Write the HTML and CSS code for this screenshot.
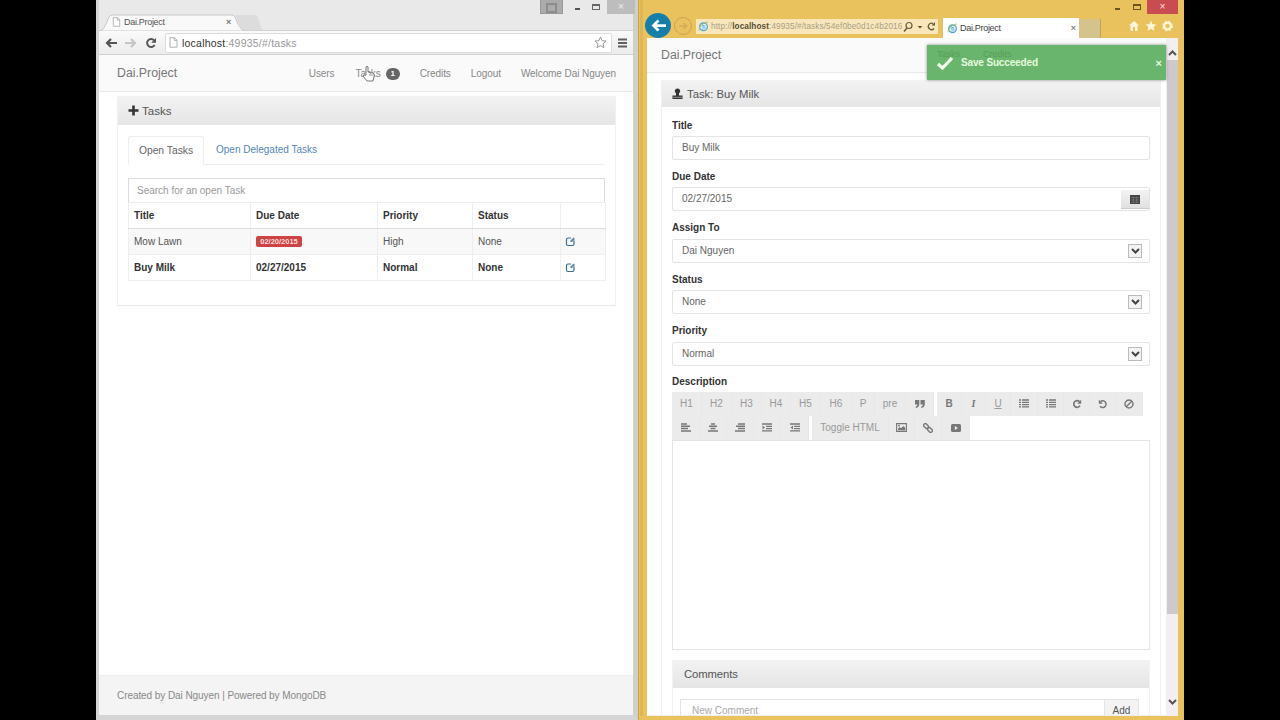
FILE: index.html
```
<!DOCTYPE html>
<html lang="en">
<head>
<meta charset="utf-8">
<title>Dai.Project</title>
<link rel="stylesheet" href="styles.css">
</head>
<body>
<svg class="defs" width="0" height="0">
  <symbol id="page" viewBox="0 0 9 11"><path d="M1 .7h4.5L8 3.2v7H1zM5.3.8v2.6H8" fill="#fff" stroke="#aaa" stroke-width=".9"/></symbol>
  <symbol id="arrow" viewBox="0 0 12 10"><path d="M6 1 2 5l4 4M2 5h10" fill="none" stroke="currentColor" stroke-width="2.2"/></symbol>
  <symbol id="reload" viewBox="0 0 12 12"><path d="M9.6 8A4 4 0 1 1 9 3.2" fill="none" stroke="currentColor" stroke-width="2"/><path d="M11 1v4.8H6.2z" fill="currentColor"/></symbol>
  <symbol id="undo" viewBox="0 0 12 12"><path d="M2.4 8.5A4 4 0 1 0 3 3.2" fill="none" stroke="currentColor" stroke-width="1.8"/><path d="M1 1v4.8h4.8z" fill="currentColor"/></symbol>
  <symbol id="edit" viewBox="0 0 11 11"><path d="M6 2H3Q1.500 2 1.500 3.500v4.500Q1.500 9.500 3 9.500h4.500Q9 9.500 9 8V4.500" fill="none" stroke="currentColor" stroke-width="1.200"/><path d="M5.500 4.500 8.500 1.500 10 3 7 6H5.500z" fill="currentColor" opacity=".8"/></symbol>
  <symbol id="list" viewBox="0 0 10 9"><path d="M0 1h2M0 3.300h2M0 5.600h2M0 7.900h2M3 1h7M3 3.300h7M3 5.600h7M3 7.900h7" stroke="currentColor" stroke-width="1.300"/></symbol>
  <symbol id="left" viewBox="0 0 10 9"><path d="M0 1h6M0 3.300h9M0 5.600h7M0 7.900h10" stroke="currentColor" stroke-width="1.500"/></symbol>
  <symbol id="center" viewBox="0 0 10 9"><path d="M3 1h4M1 3.300h8M2.500 5.600h5M0 7.900h10" stroke="currentColor" stroke-width="1.500"/></symbol>
  <symbol id="right" viewBox="0 0 10 9"><path d="M3 1h7M1 3.300h9M3 5.600h7M0 7.900h10" stroke="currentColor" stroke-width="1.500"/></symbol>
  <symbol id="indent" viewBox="0 0 10 9"><path d="M0 1h10M4 3.300h6M4 5.600h6M0 7.900h10" stroke="currentColor" stroke-width="1.300"/><path d="M.5 2.500 3 4.500.5 6.500z" fill="currentColor"/></symbol>
  <symbol id="outdent" viewBox="0 0 10 9"><path d="M0 1h10M4 3.300h6M4 5.600h6M0 7.900h10" stroke="currentColor" stroke-width="1.300"/><path d="M3 2.500.5 4.500 3 6.500z" fill="currentColor"/></symbol>
  <symbol id="ban" viewBox="0 0 10 10"><path d="M5 1a4 4 0 1 0 .01 0M2.300 7.700l5.400-5.400" fill="none" stroke="currentColor" stroke-width="1.400"/></symbol>
  <symbol id="quote" viewBox="0 0 10 8"><path d="M0 0h4.300v4.500Q4 7.500.8 8V6.500Q2.500 6 2.500 4.500H0zM5.500 0h4.300v4.500Q9.500 7.500 6.300 8V6.500Q8 6 8 4.500H5.500z" fill="currentColor"/></symbol>
  <symbol id="image" viewBox="0 0 11 9"><path d="M.6.600h9.800v7.800H.6z" fill="none" stroke="currentColor" stroke-width="1.100"/><path d="M2 7.300V5.700l1.700-1.600L5 5.300 7.500 3 9.300 5v2.300z" fill="currentColor"/><circle cx="3" cy="2.700" r=".9" fill="currentColor"/></symbol>
  <symbol id="link" viewBox="0 0 10 10"><rect x="-2.600" y="-1.700" width="5.200" height="3.400" rx="1.400" transform="translate(3 3) rotate(45)" fill="none" stroke="currentColor" stroke-width="1.400"/><rect x="-2.600" y="-1.700" width="5.200" height="3.400" rx="1.400" transform="translate(7 7) rotate(45)" fill="none" stroke="currentColor" stroke-width="1.400"/></symbol>
  <symbol id="video" viewBox="0 0 10 8"><path fill-rule="evenodd" d="M1.500 0h7Q10 0 10 1.500v5Q10 8 8.500 8h-7Q0 8 0 6.500v-5Q0 0 1.500 0M3.800 2v4L7 4z" fill="currentColor"/></symbol>
  <symbol id="ie" viewBox="0 0 11 11"><circle cx="5.500" cy="5.700" r="4.500" fill="#55a9cf"/><path d="M2.800 6h5.500Q8 3.300 5.600 3.300T2.800 6Q3 8.200 5.700 8.200 7.200 8.200 8 7.300" fill="none" stroke="#eef8fb" stroke-width="1.200"/><path d="M.7 9.500Q2 3 10 .8" fill="none" stroke="#b9bd6b"/></symbol>
  <symbol id="chev" viewBox="0 0 9 6"><path d="M1 1 4.500 4.500 8 1" fill="none" stroke="currentColor" stroke-width="2"/></symbol>
</svg>
<main class="desktop">
  <section class="chrome">
    <header class="tabstrip">
      <svg class="tab-shape" width="162" height="17" viewBox="0 0 162 17"><path d="M135 1h19q3 0 4 3l4 12h-20z" fill="#dcdcdc"/><path d="M0 17Q4 16 6 10L9 3q1-2 4-2h118q3 0 4 2l3 7q3 6 7 7z" fill="#f9f9f9" stroke="#c9c9c9"/></svg>
      <div class="ctab"><svg width="9" height="10"><use href="#page"/></svg><span>Dai.Project</span><b>×</b></div>
      <div class="winctl"><i class="user"></i><i class="min"></i><i class="max"></i><i class="close">×</i></div>
    </header>
    <div class="toolbar">
      <svg class="dark" width="12" height="10"><use href="#arrow"/></svg>
      <svg class="pale flip" width="12" height="10"><use href="#arrow"/></svg>
      <svg class="dark" width="12" height="12"><use href="#reload"/></svg>
      <div class="omnibox"><svg width="9" height="11"><use href="#page"/></svg><span class="url"><b>localhost</b>:49935/#/tasks</span>
        <svg width="13" height="13" viewBox="0 0 13 13"><path d="m6.500 1 1.600 3.700 4 .3L9 7.700l1 4-3.500-2.200L3 11.700l1-4L.9 5l4-.3z" fill="#fff" stroke="#999"/></svg></div>
      <svg class="menu" width="9" height="10" viewBox="0 0 9 10"><path d="M0 1.500h9M0 5h9M0 8.500h9" stroke="#606060" stroke-width="2.200"/></svg>
    </div>
    <nav class="navbar">
      <span class="brand">Dai.Project</span>
      <div class="links"><span class="n1">Users</span><span class="n2">Tasks</span><i class="badge">1</i><span class="n3">Credits</span><span class="n4">Logout</span><span class="n5">Welcome Dai Nguyen</span></div>
      <svg class="hand" width="14" height="18" viewBox="0 0 14 18"><path d="M4 10V2q1-1.500 2 0v5l5 1q1.500.5 1.200 3L11 16H5L1 11q0-2 3-.5" fill="#fff" stroke="#777"/><path d="M8 8v3M10 8.500V11" stroke="#999"/></svg>
    </nav>
    <div class="cpage">
      <section class="panel tasks">
        <h2 class="panel-head"><svg width="11" height="11" viewBox="0 0 11 11"><path d="M5.500.5v10M.5 5.500h10" stroke="#333" stroke-width="2.600"/></svg>Tasks</h2>
        <div class="panel-body">
          <div class="tabs"><span class="active">Open Tasks</span><span class="other">Open Delegated Tasks</span></div>
          <div class="search">Search for an open Task</div>
          <table class="grid">
            <colgroup><col class="c1"><col class="c2"><col class="c3"><col class="c4"><col class="c5"></colgroup>
            <tr><th>Title</th><th>Due Date</th><th>Priority</th><th>Status</th><th></th></tr>
            <tr class="odd"><td>Mow Lawn</td><td><span class="overdue">02/20/2015</span></td><td>High</td><td>None</td><td><svg width="11" height="11"><use href="#edit"/></svg></td></tr>
            <tr class="strong"><td>Buy Milk</td><td>02/27/2015</td><td>Normal</td><td>None</td><td><svg width="11" height="11"><use href="#edit"/></svg></td></tr>
          </table>
        </div>
      </section>
    </div>
    <footer class="foot">Created by Dai Nguyen | Powered by MongoDB</footer>
  </section>

  <section class="iewin">
    <header class="iebar">
      <div class="back"><svg width="15" height="13" viewBox="0 0 12 10"><use href="#arrow"/></svg></div>
      <div class="fwd"><svg class="flip" width="9" height="8" viewBox="0 0 12 10"><use href="#arrow"/></svg></div>
      <div class="address"><svg width="11" height="11"><use href="#ie"/></svg><span class="addr">http://<b>localhost</b>:49935/#/tasks/54ef0be0d1c4b2016</span>
        <svg width="36" height="12" viewBox="0 0 36 12"><circle cx="7" cy="4.500" r="3" fill="none" stroke="#665b38" stroke-width="1.200"/><path d="M5 7 2 10.500" stroke="#665b38" stroke-width="1.500"/><path d="M15.500 5h5L18 7.500z" fill="#665b38"/><path d="M32 7.500A3.200 3.200 0 1 1 31 2.600" fill="none" stroke="#665b38" stroke-width="1.300"/><path d="M33 1v3.500h-3.500z" fill="#665b38"/></svg></div>
      <div class="ietab"><svg width="11" height="11"><use href="#ie"/></svg><span>Dai.Project</span><b>×</b></div>
      <div class="newtab"></div>
      <div class="ieright">
        <div class="iectl"><i class="min"></i><i class="max"></i><i class="close">×</i></div>
        <svg width="44" height="12" viewBox="0 0 44 12"><path d="M5 1 0 5.500h1.500V11H4V7h2v4h2.500V5.500H10zM22 .5l1.500 3.700 4 .3-3 2.500 1 4L22 8.800 18.500 11l1-4-3-2.500 4-.3z" fill="#fff6d8"/><circle cx="38.500" cy="6" r="3.400" fill="none" stroke="#fff6d8" stroke-width="2.400"/><circle cx="38.500" cy="6" r="5" fill="none" stroke="#fff6d8" stroke-dasharray="2 2"/></svg>
      </div>
    </header>
    <div class="ieview">
      <div class="iepage">
        <nav class="navbar"><span class="brand">Dai.Project</span></nav>
        <section class="panel task">
          <h2 class="panel-head"><svg width="11" height="12" viewBox="0 0 11 12"><path d="M5.500.5a2.600 2.600 0 0 1 1.500 4.800L7 7.500h3.500V11H.5V7.500H4V5.300A2.600 2.600 0 0 1 5.500.5z" fill="#333"/><path d="M1 9.300h9" stroke="#ddd" stroke-width=".6"/></svg>Task: Buy Milk</h2>
          <div class="form">
            <div class="field"><label>Title</label><div class="input">Buy Milk</div></div>
            <div class="field"><label>Due Date</label><div class="input date"><span>02/27/2015</span><i class="cal"><svg width="10" height="10" viewBox="0 0 10 10"><path d="M0 1h10v9H0z" fill="#444"/><path d="M1 3.500h8M1 6h8M1 8.300h8M3.500 3v6M6.500 3v6" stroke="#888" stroke-width=".5"/></svg></i></div></div>
            <div class="field"><label>Assign To</label><div class="input"><span>Dai Nguyen</span><i class="drop"><svg width="9" height="6"><use href="#chev"/></svg></i></div></div>
            <div class="field"><label>Status</label><div class="input"><span>None</span><i class="drop"><svg width="9" height="6"><use href="#chev"/></svg></i></div></div>
            <div class="field"><label>Priority</label><div class="input"><span>Normal</span><i class="drop"><svg width="9" height="6"><use href="#chev"/></svg></i></div></div>
            <label>Description</label>
            <div class="editor-bar row1">
              <span>H1</span><span>H2</span><span>H3</span><span>H4</span><span>H5</span><span>H6</span><span>P</span><span>pre</span><span><svg width="10" height="8"><use href="#quote"/></svg></span><em></em>
              <span class="bold">B</span><span class="ital">I</span><span class="under">U</span><span><svg width="10" height="9"><use href="#list"/></svg></span><span><svg width="10" height="9"><use href="#list"/></svg></span><span><svg width="10" height="10"><use href="#reload"/></svg></span><span><svg width="10" height="10"><use href="#undo"/></svg></span><span><svg width="10" height="10"><use href="#ban"/></svg></span>
            </div>
            <div class="editor-bar row2">
              <span><svg width="10" height="9"><use href="#left"/></svg></span><span><svg width="10" height="9"><use href="#center"/></svg></span><span><svg width="10" height="9"><use href="#right"/></svg></span><span><svg width="10" height="9"><use href="#indent"/></svg></span><span><svg width="10" height="9"><use href="#outdent"/></svg></span><em></em>
              <span>Toggle HTML</span><span><svg width="11" height="9"><use href="#image"/></svg></span><span><svg width="10" height="10"><use href="#link"/></svg></span><span><svg width="10" height="8"><use href="#video"/></svg></span>
            </div>
            <div class="textarea"></div>
            <section class="comments"><h2 class="panel-head">Comments</h2>
              <div class="newc"><span>New Comment</span><b>Add</b></div></section>
          </div>
        </section>
      </div>
      <div class="scroll"><svg width="9" height="6"><use href="#chev" transform="rotate(180 4.5 3)"/></svg><i></i><svg width="9" height="6"><use href="#chev"/></svg></div>
    </div>
    <div class="toast"><div class="ghost"><span>Tasks</span><span>Credits</span></div><svg width="18" height="14" viewBox="0 0 18 14"><path d="m2 8 4.500 4L16 2" fill="none" stroke="#f4fff0" stroke-width="3.200"/></svg><strong>Save Succeeded</strong><b>×</b></div>
  </section>
</main>
</body>
</html>
```
FILE: styles.css
```
* { box-sizing: border-box; }
body { margin: 0; background: #000; font: 10.3px/14px "Liberation Sans", Arial, sans-serif; color: #777; }
svg { display: block; flex: none; }
i { font-style: normal; }
.defs { position: absolute; }
.desktop { width: 1280px; height: 720px; overflow: hidden; padding-left: 96px; display: flex; }
.flip { transform: scaleX(-1); }

.chrome { width: 542px; height: 720px; background: #fff; border: solid #d5d5d5; border-width: 0 5px 5px 3px; border-right-color: #cfd0c8; display: flex; flex-direction: column; flex: none; }
.tabstrip { position: relative; height: 31px; background: #e9e9e9; display: flex; justify-content: space-between; align-items: flex-start; border-bottom: 1px solid #d2d2d2; flex: none; }
.tab-shape { position: absolute; left: 1px; bottom: -1px; }
.ctab { position: relative; display: flex; align-items: center; margin: 16px 0 0 13px; height: 12px; width: 119px; font-size: 9px; letter-spacing: -.3px; color: #555; }
.ctab span { margin-left: 3px; flex: 1; }
.ctab b { font-size: 9px; color: #777; }
.winctl { display: flex; height: 14px; margin-right: -2px; }
.winctl .user { width: 23px; background: #ababab; border: 1px solid #999; border-top: 0; margin-right: 12px; padding: 3px 5px; }
.winctl .user::after { content: ""; display: block; height: 6px; border: 2px solid #8c8c8c; }
.min { width: 5px; height: 2px; margin-top: 8px; background: #555; }
.max { width: 8px; height: 6px; margin: 4px 7px 0 13px; border: 1px solid #666; border-top-width: 2px; }
.winctl .close { width: 28px; background: #bdbdbd; color: #eee; text-align: center; line-height: 13px; }
.winctl .max { margin-left: 12px; }
.toolbar { height: 24px; background: linear-gradient(#fafafa, #ececec); border-bottom: 1px solid #d0d0d0; display: flex; align-items: center; padding: 0 6px; gap: 8px; flex: none; }
.dark { color: #555; } .pale { color: #c5c5c5; }
.omnibox { flex: 1; height: 20px; display: flex; align-items: center; padding: 0 4px; background: #fff; border: 1px solid #ddd; border-radius: 2px; font-size: 10.5px; color: #999; margin-right: -2px; padding-left: 3px; }
.url { flex: 1; margin-left: 4px; letter-spacing: .22px; }
.url b { font-weight: normal; color: #333; }
.navbar { background: #fafafa; border-bottom: 1px solid #e9e9e9; display: flex; align-items: center; position: relative; flex: none; }
.chrome .navbar { height: 37px; padding: 0 17px 0 18px; justify-content: space-between; }
.brand { font-size: 12.3px; color: #777; }
.links { display: flex; align-items: center; white-space: nowrap; font-size: 10px; color: #888; padding-top: 1px; }
.n2 { margin-left: 21px; } .n3 { margin-left: 20px; } .n4 { margin-left: 20px; } .n5 { margin-left: 20px; letter-spacing: -.05px; }
.links span { letter-spacing: -.08px; }
.badge { width: 14px; height: 12px; margin-left: 5px; border-radius: 6px; background: #666; color: #fff; font: bold 8px/12px "Liberation Sans", sans-serif; text-align: center; }
.hand { position: absolute; left: 263px; top: 10px; }
.cpage { padding: 4px 17px 0 18px; flex: 1; }
.panel { border: 1px solid #f0f0f0; border-top: 0; background: #fff; }
.panel-head { margin: 0; font-weight: normal; font-size: 12px; color: #555; background: linear-gradient(#f3f3f3, #e5e5e5); height: 28px; display: flex; align-items: center; padding-left: 10px; gap: 4px; }
.tasks { height: 210px; border-bottom: 1px solid #e9e9e9; }
.tasks .panel-head { font-size: 11.5px; height: 29px; gap: 3px; }
.panel-body { padding: 11px 10px 0; }
.tabs { display: flex; height: 29px; border-bottom: 1px solid #eee; line-height: 28px; font-size: 10px; }
.active { width: 76px; height: 29px; border: 1px solid #eee; border-bottom-color: #fff; border-radius: 3px 3px 0 0; text-align: center; line-height: 27px; color: #666; font-size: 10.3px; }
.other { margin-left: 12px; color: #5486b8; }
.search { height: 25px; margin-top: 13px; border: 1px solid #ddd; padding-left: 8px; line-height: 23px; color: #999; font-size: 10px; }
.grid { width: 477px; table-layout: fixed; border-collapse: collapse; margin-top: -1px; font-size: 10px; color: #555; }
.c1 { width: 122px; } .c2 { width: 127px; } .c3 { width: 95px; } .c4 { width: 88px; } .c5 { width: 45px; }
.grid tr { height: 26px; }
.grid th, .grid td { border: 1px solid #eee; padding: 0 5px; text-align: left; }
.grid th { color: #333; border-bottom-color: #ddd; }
.grid .odd { background: #f8f8f8; }
.strong { font-weight: bold; color: #333; }
.grid svg { color: #3c6e8f; margin-left: -1px; }
.overdue { display: inline-block; width: 46px; height: 11px; border-radius: 2px; background: #ce4343; color: #fbdede; font: bold 7.5px/11px "Liberation Sans", sans-serif; text-align: center; vertical-align: middle; }
.foot { height: 40px; background: #f4f4f4; border-top: 1px solid #eee; padding-left: 18px; line-height: 39px; font-size: 10px; letter-spacing: -.07px; color: #888; flex: none; }

.iewin { position: relative; width: 546px; height: 720px; padding: 0 6px 4px 8px; background: #e9c25e; border-left: 1px solid #c9a34e; display: flex; flex-direction: column; flex: none; }
.iewin::before { content: ""; position: absolute; left: 1px; top: 0; width: 3px; height: 716px; background: #dfb656; }
.iebar { height: 38px; display: flex; align-items: flex-end; flex: none; position: relative; }
.back { width: 26px; height: 25px; margin: 0 0 0 -2px; border-radius: 50%; background: #157fa9; color: #fff; display: grid; place-items: center; }
.fwd { width: 18px; height: 18px; margin: 0 4px 3px 3px; border-radius: 50%; border: 1px solid #cf9e55; color: #d8a960; display: grid; place-items: center; }
.address { width: 242px; height: 15px; margin: 0 5px 4px 0; background: #f9e7bb; display: flex; align-items: center; padding: 0 0 0 2px; font-size: 8px; color: #a79f85; white-space: nowrap; }
.addr { margin-left: 2px; flex: 1; overflow: hidden; font-size: 8.2px; letter-spacing: .1px; }
.addr b { color: #554d36; }
.ietab { width: 136px; height: 20px; background: #fff; display: flex; align-items: center; padding: 0 3px 0 4px; font-size: 9px; color: #444; }
.ietab span { flex: 1; margin-left: 2px; letter-spacing: -.3px; } .ietab b { color: #888; }
.newtab { width: 22px; height: 19px; background: #d4c38a; border-right: 1px solid #bba462; }
.ieright { height: 38px; flex: 1; display: flex; flex-direction: column; align-items: flex-end; gap: 6px; padding-right: 5px; }
.iectl { display: flex; height: 14px; margin-right: -5px; }
.iectl .min { background: #6c5420; } .iectl .max { border-color: #6c5420; margin-right: 6px; }
.iectl .close { width: 31px; background: #c94c50; color: #ffdce0; text-align: center; line-height: 13px; }
.ieview { flex: 1; min-height: 0; display: flex; background: #fff; border-bottom: 1px solid #eee; }
.iepage { flex: 1; min-width: 0; overflow: hidden; }
.ieview .navbar { height: 35px; padding-left: 14px; }
.task { margin: 7px 5px 0 14px; height: 700px; }
.task > .panel-head { height: 27px; font-size: 11.3px; }
.form { padding: 11.5px 10px 0; }
label { display: block; height: 14px; line-height: 14px; margin-bottom: 3.5px; font-weight: bold; font-size: 10px; color: #333; }
.field { height: 51.4px; }
.input { height: 24px; border: 1px solid #e4e4e4; display: flex; align-items: center; justify-content: space-between; padding: 0 7px 0 9px; font-size: 10px; color: #666; border-radius: 2px; }
.date { padding-right: 0; }
.cal { width: 28px; height: 19px; background: linear-gradient(#f3f3f3, #e1e1e1); border-bottom: 1px solid #ccc; display: grid; place-items: center; }
.drop { width: 14px; height: 14px; background: #f3f3f3; border: 1px solid #bbb; color: #444; display: grid; place-items: center; }
.editor-bar { display: grid; height: 24px; margin-right: auto; width: max-content; }
.editor-bar span { background: #ebebeb; border-right: 1px solid #e7e7e7; display: grid; place-items: center; color: #999; font-size: 10px; white-space: nowrap; }
.editor-bar svg { color: #777; }
.editor-bar em { background: #fff; }
.row1 { grid-template-columns: 30px 30px 30px 29px 30px 31px 23px 31px 28px 3px 25px 24px 25px 27px 26px 26px 26px 27px; }
.row2 { grid-template-columns: 28px 27px 27px 27px 28px 3px 77px 26px 27px 28px; }
.row1 .bold { font-weight: bold; color: #777; }
.row1 .ital { font: italic bold 10px "Liberation Serif", serif; color: #777; }
.row1 .under { text-decoration: underline; }
label + .editor-bar { margin-top: -1px; }
.textarea { height: 210px; border: 1px solid #e4e4e4; }
.comments { margin-top: 10px; border: solid #f2f2f2; border-width: 0 1px; height: 80px; }
.comments .panel-head { font-size: 11.3px; padding-left: 11px; letter-spacing: -.1px; }
.newc { margin: 11px 10px 0 7px; height: 25px; border: 1px solid #e3e3e3; display: flex; line-height: 22px; color: #aaa; font-size: 10px; }
.newc span { flex: 1; padding-left: 11px; }
.newc b { width: 34px; background: #f3f3f3; border-left: 1px solid #e3e3e3; text-align: center; color: #555; font-weight: normal; }
.scroll { width: 12px; background: #f0f0f0; display: flex; flex-direction: column; align-items: center; padding: 12px 0 10px; color: #555; }
.scroll i { width: 11px; height: 554px; margin: 4px 0 auto; background: #cbcbcd; }
.toast { position: absolute; left: 288px; top: 45px; width: 239px; height: 35px; background: #6ab56d; box-shadow: 0 0 3px #888; display: flex; align-items: center; padding: 0 4px 0 9px; color: #e6f9df; font-size: 10px; }
.toast strong { margin-left: 7px; flex: 1; letter-spacing: -.15px; padding-top: 1px; }
.toast b { font-size: 11px; }
.ghost { position: absolute; left: 10px; top: 2px; display: flex; gap: 23px; color: #579d5a; font-size: 9px; }
```
